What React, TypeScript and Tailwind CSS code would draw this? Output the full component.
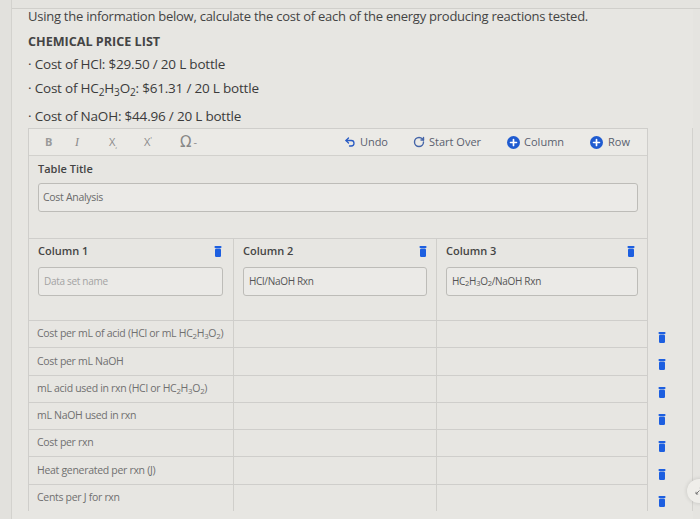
import { Undo2, RotateCw } from "lucide-react";

const font = { fontFamily: "'Open Sans', 'Liberation Sans', sans-serif" };

function Trash() {
  return (
    <svg width="8" height="11" viewBox="0 0 8 11" className="shrink-0">
      <rect x="0.5" y="0" width="7" height="2" rx="0.8" fill="#1d5fe0" />
      <rect x="1" y="2.6" width="6" height="8.4" rx="1.2" fill="#1d5fe0" />
    </svg>
  );
}

function PlusCircle() {
  return (
    <svg width="13" height="13" viewBox="0 0 14 14" className="shrink-0">
      <circle cx="7" cy="7" r="7" fill="#1f5bd0" />
      <path d="M7 3.8v6.4M3.8 7h6.4" stroke="#fff" strokeWidth="1.8" strokeLinecap="round" />
    </svg>
  );
}

function Acid() {
  return (
    <>
      HC<sub>2</sub>H<sub>3</sub>O<sub>2</sub>
    </>
  );
}

const rows: React.ReactNode[] = [
  <>Cost per mL of acid (HCl or mL <Acid />)</>,
  <>Cost per mL NaOH</>,
  <>mL acid used in rxn (HCl or <Acid />)</>,
  <>mL NaOH used in rxn</>,
  <>Cost per rxn</>,
  <>Heat generated per rxn (J)</>,
  <>Cents per J for rxn</>,
];

const cols = [
  { t: "Column 1", v: <>Data set name</>, ph: true, w: "mr-[10px]", tm: "mr-[11px]" },
  { t: "Column 2", v: <>HCl/NaOH Rxn</>, ph: false, w: "mr-[9px]", tm: "mr-[9px]" },
  { t: "Column 3", v: <><Acid />/NaOH Rxn</>, ph: false, w: "mr-[9px]", tm: "mr-[12px]" },
];

export default function App() {
  return (
    <div className="w-[700px] h-[519px] overflow-hidden bg-[#e7e6e2] text-[#3b3b3b] flex" style={font}>
      <div className="w-[12px] shrink-0 border-r border-[#d3d2ce] bg-[#e2e1dd]" />
      <div className="flex-1 flex flex-col">
        <div className="h-[9px] border-b border-[#d0cfcb] bg-[#e4e3df]" />
        <div className="flex flex-1">
          <div className="w-[681px] shrink-0 pl-[16px] flex flex-col">
            <p className="text-[13px] leading-[15px] tracking-[-0.25px] text-[#444]">
              Using the information below, calculate the cost of each of the energy producing reactions tested.
            </p>
            <p className="text-[12.6px] leading-[15px] mt-[10px] font-bold text-[#444]">CHEMICAL PRICE LIST</p>
            <p className="text-[13.5px] leading-[15px] mt-[8px] tracking-[-0.2px]">· Cost of HCl: $29.50 / 20 L bottle</p>
            <p className="text-[13.5px] leading-[15px] mt-[9px] tracking-[-0.2px]">
              · Cost of <Acid />: $61.31 / 20 L bottle
            </p>
            <p className="text-[13.5px] leading-[15px] mt-[13px] tracking-[-0.2px]">· Cost of NaOH: $44.96 / 20 L bottle</p>

            <div className="flex mt-[4px]">
              <div className="w-[620px] shrink-0 border-l border-r border-t border-[#cfcecb]">
                <div className="h-[27px] flex items-center border-b border-[#d2d1cd] bg-[#ebeae6] text-[11px] text-[#8b8b8b]">
                  <span className="ml-[16px] w-[30px] font-bold text-[#9a9a9a]">B</span>
                  <span className="w-[34px] italic text-[12px]" style={{ fontFamily: "'Liberation Serif', serif" }}>I</span>
                  <span className="w-[35px]">X<sub className="text-[8px]">,</sub></span>
                  <span className="w-[36px]">X<sup className="text-[8px]">'</sup></span>
                  <span className="text-[15px] text-[#888]" style={{ fontFamily: "'DejaVu Sans', sans-serif" }}>Ω</span>
                  <span className="ml-[2px]">-</span>
                  <div className="ml-auto flex items-center text-[11px] text-[#5a5f6e]">
                    <Undo2 size={12} strokeWidth={2.6} className="text-[#2a5cc4] mr-[4px]" />
                    <span className="mr-[25px]">Undo</span>
                    <RotateCw size={12} strokeWidth={2.8} className="text-[#4565a8] mr-[4px]" />
                    <span className="mr-[26px]">Start Over</span>
                    <PlusCircle />
                    <span className="ml-[4px] mr-[26px]">Column</span>
                    <PlusCircle />
                    <span className="ml-[5px] mr-[17px]">Row</span>
                  </div>
                </div>
                <div className="px-[9px] pt-[6px] pb-[26px]">
                  <p className="text-[11px] font-semibold text-[#444] leading-[14px]">Table Title</p>
                  <div className="mt-[7px] h-[29px] rounded-[3px] border border-[#bdbcb8] bg-[#ebeae7] flex items-center px-[4px] text-[10.5px] text-[#6a6a6a] tracking-[-0.3px]">
                    Cost Analysis
                  </div>
                </div>
                <div className="grid grid-cols-[205px_203px_1fr] border-t border-[#cfcecb]">
                  {cols.map((c, i) => (
                    <div key={i} className={`pl-[9px] pt-[5px] pb-[24px] ${i < 2 ? "border-r border-[#d0cfcb]" : ""}`}>
                      <div className={`flex items-center justify-between h-[14px] ${c.tm}`}>
                        <span className="text-[11px] font-semibold text-[#444]">{c.t}</span>
                        <Trash />
                      </div>
                      <div
                        className={`mt-[9px] h-[29px] rounded-[3px] border border-[#bdbcb8] bg-[#ebeae7] flex items-center px-[5px] text-[10px] tracking-[-0.3px] ${c.w} ${c.ph ? "text-[#a3a3a3]" : "text-[#555]"}`}
                      >
                        {c.v}
                      </div>
                    </div>
                  ))}
                </div>
                {rows.map((r, i) => (
                  <div key={i} className="grid grid-cols-[205px_203px_1fr] h-[27.3px] border-t border-[#cfcecb]">
                    <div className="border-r border-[#d0cfcb] pl-[8px] flex items-center text-[10.5px] tracking-[-0.3px] text-[#707070]">
                      <span>{r}</span>
                    </div>
                    <div className="border-r border-[#d0cfcb]" />
                    <div />
                  </div>
                ))}
              </div>
              <div className="flex-1 flex flex-col border-r border-[#d3d2ce]">
                <div className="h-[191px]" />
                {rows.map((_, i) => (
                  <div key={i} className="h-[27.3px] flex items-center pl-[10px] pt-[10px]">
                    <Trash />
                  </div>
                ))}
              </div>
            </div>
          </div>
          <div className="flex-1 relative bg-[#e5e4e0]">
            <div className="absolute left-[-6px] top-[470px] w-[24px] h-[24px] rounded-full bg-[#efeeea] shadow-[0_0_4px_rgba(0,0,0,0.15)] flex items-center justify-center">
              <svg width="10" height="10" viewBox="0 0 10 10">
                <path d="M2 8l3-3M2 8h2.2M2 8V5.8M8 2L5.5 4.5M8 2H5.8M8 2v2.2" stroke="#777" strokeWidth="1" fill="none" />
              </svg>
            </div>
          </div>
        </div>
      </div>
    </div>
  );
}
